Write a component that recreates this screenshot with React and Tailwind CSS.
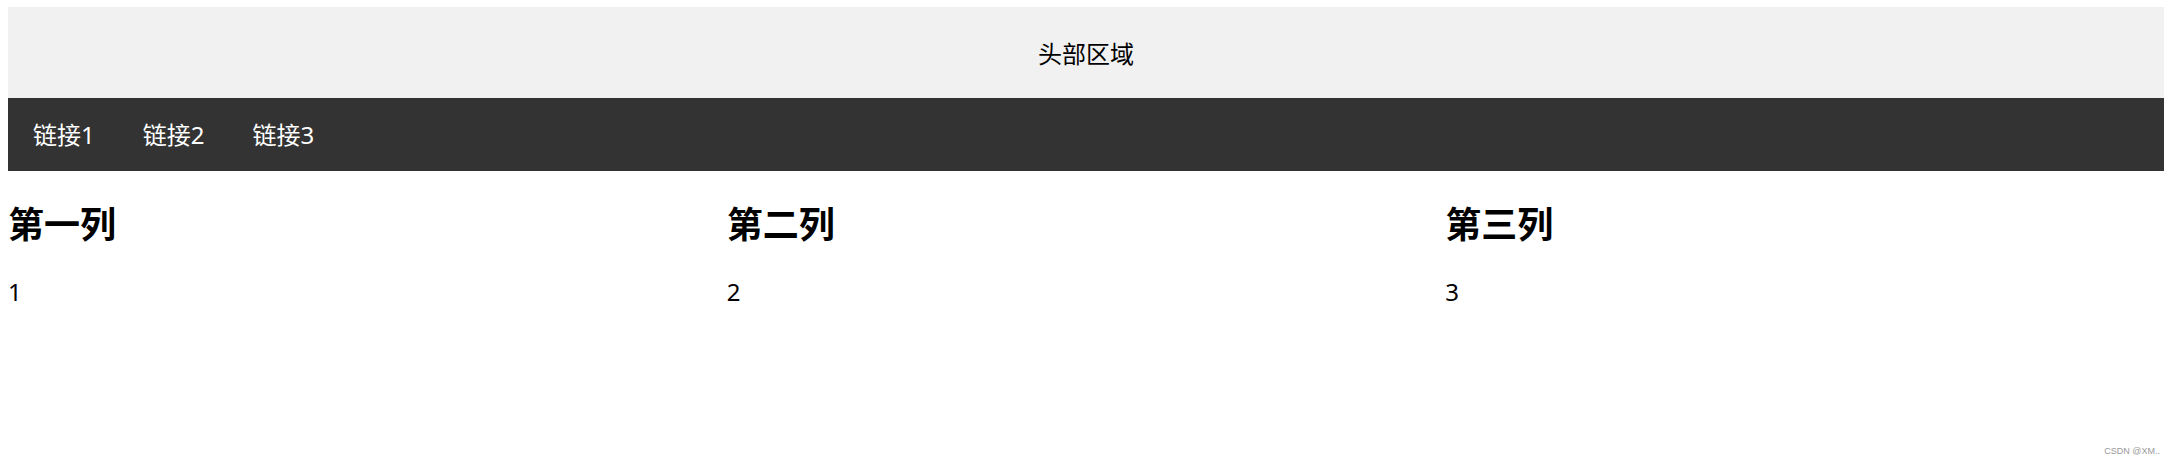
import React from "react";

const links = ["链接1", "链接2", "链接3"];
const cols = [
  { title: "第一列", body: "1" },
  { title: "第二列", body: "2" },
  { title: "第三列", body: "3" },
];

export default function App() {
  return (
    <div className="relative h-[465px] bg-white pl-[8px] pr-[10px] pt-[7px] text-black font-['Noto_Sans','Noto_Sans_CJK_SC',sans-serif]">
      {/* Header */}
      <div className="flex h-[91px] items-center justify-center bg-[#f1f1f1] pt-[2px] text-[24px] leading-[32px]">
        头部区域
      </div>

      {/* Nav */}
      <nav className="flex h-[73px] items-center bg-[#333333] pl-[1px]">
        {links.map((l) => (
          <a key={l} href="#" className="px-[24px] text-[24px] leading-[32px] text-white">
            {l}
          </a>
        ))}
      </nav>

      {/* Columns */}
      <div className="grid grid-cols-3">
        {cols.map((c) => (
          <div key={c.title}>
            <h2 className="mt-[30px] text-[36px] font-bold leading-[47px]">{c.title}</h2>
            <p className="mt-[28px] text-[24px] leading-[32px]">{c.body}</p>
          </div>
        ))}
      </div>

      <div className="absolute bottom-[8px] right-[14px] text-[9px] leading-[12px] text-[#999] font-['Liberation_Sans',sans-serif]">
        CSDN @XM..
      </div>
    </div>
  );
}
